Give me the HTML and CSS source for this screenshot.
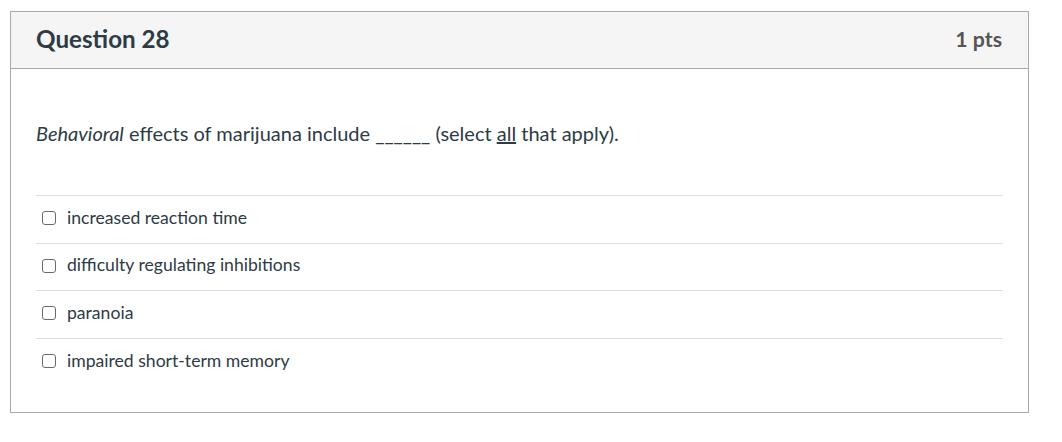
FILE: index.html
```html
<!DOCTYPE html>
<html>
<head>
<meta charset="utf-8">
<link rel="stylesheet" href="styles.css">
</head>
<body>
<div class="question">
  <div class="header">
    <h2 class="title">Question 28</h2>
    <div class="points">1 pts</div>
  </div>
  <div class="content">
    <p class="text"><em>Behavioral</em> effects of marijuana include ______ (select <u>all</u> that apply).</p>
    <div class="answers">
      <label class="answer"><span class="box"></span><span>increased reaction time</span></label>
      <label class="answer"><span class="box"></span><span>difficulty regulating inhibitions</span></label>
      <label class="answer"><span class="box"></span><span>paranoia</span></label>
      <label class="answer"><span class="box"></span><span>impaired short-term memory</span></label>
    </div>
  </div>
</div>
</body>
</html>
```
FILE: styles.css
```css
html, body { margin: 0; padding: 0; background: #fff; }
body { padding: 11px 0 0 10px; font-family: Lato, "Open Sans", sans-serif; color: #2d3b45; }
.question { width: 1019px; border: 1px solid #a9a9a9; box-sizing: border-box; }
.header {
  height: 57px; box-sizing: border-box;
  background: #f5f5f5; border-bottom: 1px solid #a9a9a9;
  display: flex; align-items: center; justify-content: space-between;
  padding: 0 26px 3px 25px;
}
.title { margin: 0; font-size: 24.2px; line-height: 30px; font-weight: 700; color: #2d3b45; }
.points { font-size: 21.3px; line-height: 26px; font-weight: 700; color: #555; }
.content { padding: 0 25px 26px 25px; }
.text { margin: 0; padding: 52px 0 50px; font-size: 20px; line-height: 24px; }
.text em { font-style: italic; }
.answers { border-top: 1px solid #ddd; }
.answer {
  display: flex; align-items: center; gap: 11px;
  height: 47.5px; box-sizing: border-box;
  border-bottom: 1px solid #ddd;
  padding-left: 6px; padding-bottom: 4px; font-size: 17.6px; color: #2d3b45;
}
.answer:last-child { border-bottom: none; }
.box {
  width: 14px; height: 14px; box-sizing: border-box;
  border: 1.5px solid #6b6b6b; border-radius: 3px; background: #fff;
  flex: none; margin-top: 2px;
}
```
